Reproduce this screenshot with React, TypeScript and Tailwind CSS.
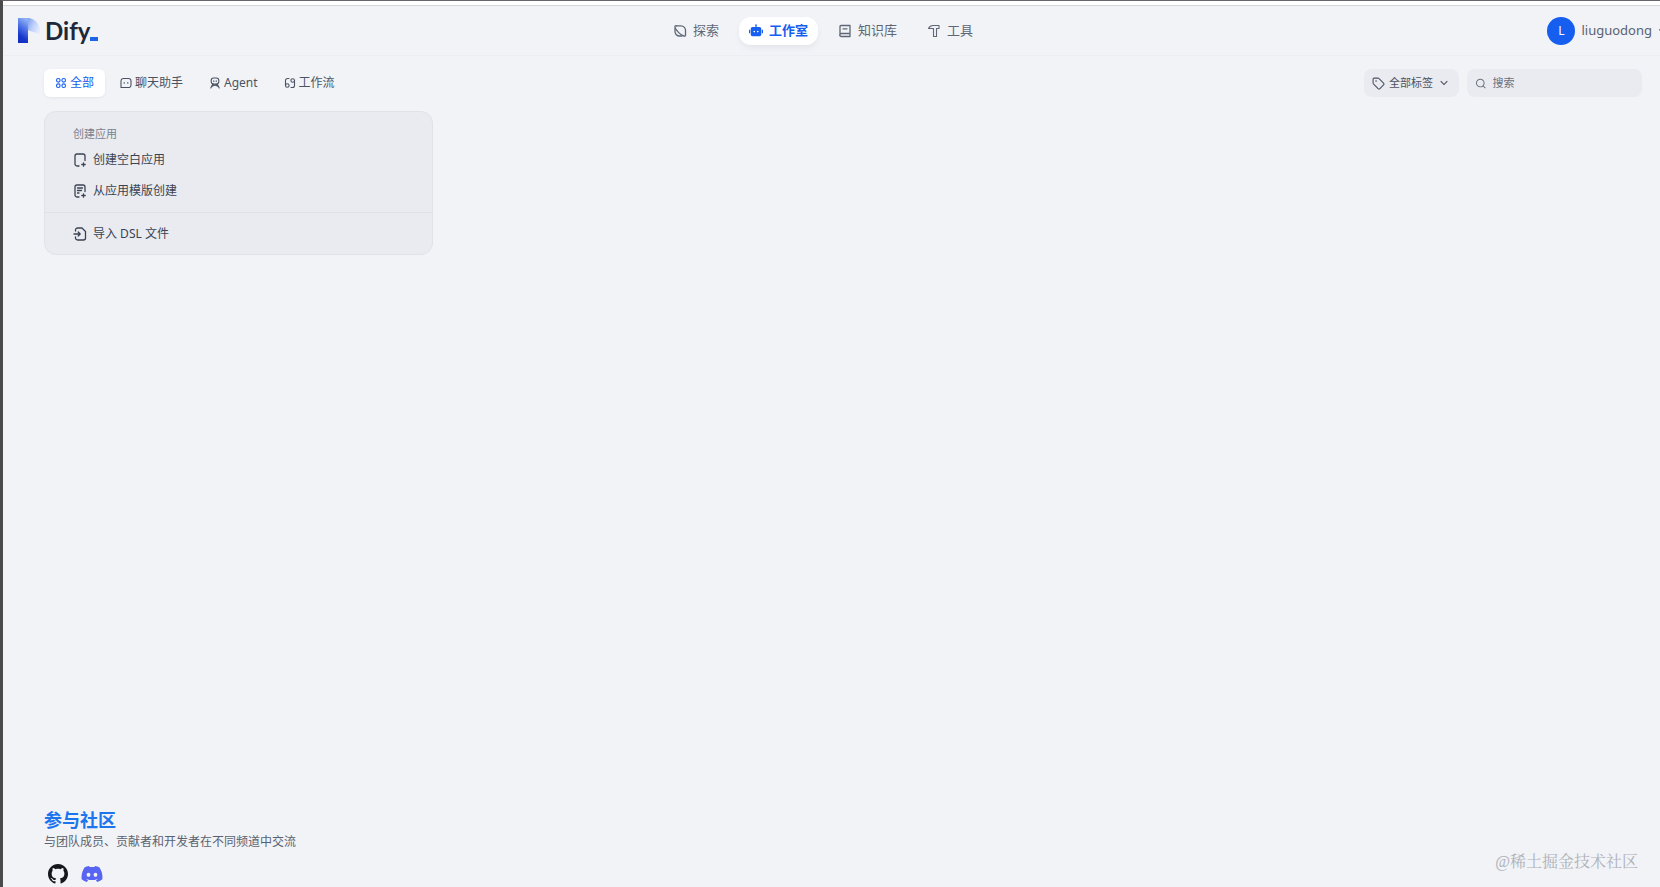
import type { ReactNode } from 'react';
import { Tag } from 'lucide-react';
import {
  RiArrowDownSLine,
  RiDiscordFill,
  RiGithubFill,
  RiRobot2Fill,
  RiSearchLine,
} from 'react-icons/ri';

type NavItem = { id: string; label: string; icon: ReactNode; active?: boolean };

const stroke = {
  fill: 'none',
  stroke: 'currentColor',
  strokeWidth: 1.3,
  strokeLinecap: 'round' as const,
  strokeLinejoin: 'round' as const,
  'aria-hidden': true,
};

function LogoMark() {
  return (
    <svg width="23" height="25" viewBox="0 0 23 25" aria-hidden="true">
      <defs>
        <linearGradient id="stem" x1="0.6" y1="0" x2="0.3" y2="1">
          <stop offset="0" stopColor="#8fb0f4" />
          <stop offset="0.4" stopColor="#4a6fe4" />
          <stop offset="0.75" stopColor="#1637cc" />
          <stop offset="1" stopColor="#1230c0" />
        </linearGradient>
        <linearGradient id="bowl" x1="0" y1="0.1" x2="1" y2="0.6">
          <stop offset="0" stopColor="#7d9ff0" />
          <stop offset="0.5" stopColor="#bccffa" />
          <stop offset="1" stopColor="#e3ebfd" />
        </linearGradient>
      </defs>
      <path d="M9.500 0a12.500 12.500 0 0 1 12.500 12.500c0 1.500-.2 2.500-.6 3.500L9.500 12z" fill="url(#bowl)" />
      <path d="M0 0h10v25H0z" fill="url(#stem)" />
    </svg>
  );
}

function ExploreIcon() {
  return (
    <svg width="14" height="14" viewBox="0 0 14 14" {...stroke}>
      <path d="M3.500 1.800H8A4.500 4.500 0 0 1 12.500 6.300V11" />
      <path d="M2 4.500V7.500A4.500 4.500 0 0 0 6.500 12H9" />
      <path d="M3.500 1.800C2.300 1.500 1.700 2 2 3.300c.4 1.700 2 3.600 3.700 5.300s3.500 3 5.100 3.400c1.300.3 1.900-.1 1.700-1.200" />
    </svg>
  );
}

function BookIcon() {
  return (
    <svg width="14" height="14" viewBox="0 0 14 14" {...stroke}>
      <path d="M2 11.200V2.500a1 1 0 0 1 1-1h9v11H3.200a1.200 1.200 0 0 1 0-3H12M5 4.800h4" />
    </svg>
  );
}

function HammerIcon() {
  return (
    <svg width="14" height="14" viewBox="0 0 14 14" {...stroke} strokeWidth={1.1}>
      <path d="M1.500 4.500C2.500 2.500 4 1.500 6 1.500h6v3H9.500v8h-3v-8z" />
    </svg>
  );
}

function AllIcon() {
  return (
    <svg width="12" height="12" viewBox="0 0 12 12" {...stroke} strokeWidth={1.1}>
      <circle cx="3.300" cy="3.300" r="1.800" />
      <circle cx="8.700" cy="3.300" r="1.800" />
      <circle cx="3.300" cy="8.700" r="1.800" />
      <circle cx="8.700" cy="8.700" r="1.800" />
    </svg>
  );
}

function ChatIcon() {
  return (
    <svg width="12" height="12" viewBox="0 0 12 12" {...stroke} strokeWidth={1.1}>
      <path d="M1 10.500V4a2.500 2.500 0 0 1 2.500-2.500h5A2.500 2.500 0 0 1 11 4v4a2.500 2.500 0 0 1-2.500 2.500z" />
      <path d="M4.200 5.500v.8M7.800 5.500v.8" />
    </svg>
  );
}

function AgentIcon() {
  return (
    <svg width="12" height="12" viewBox="0 0 12 12" {...stroke} strokeWidth={1.1}>
      <rect x="2.200" y="1" width="7.600" height="6" rx="2.500" />
      <path d="M4.800 3.800v.6M7.200 3.800v.6M3.800 7l-2 4M8.200 7l2 4M3.200 9.200 8.200 7M8.800 9.200 3.800 7" />
    </svg>
  );
}

function FlowIcon() {
  return (
    <svg width="12" height="12" viewBox="0 0 12 12" {...stroke} strokeWidth={1.1}>
      <path d="M5 1.500H3.500A2 2 0 0 0 1.500 3.500v5M7 10.500h1.500a2 2 0 0 0 2-2v-5" />
      <circle cx="3.300" cy="8.500" r="1.800" />
      <circle cx="8.700" cy="3.500" r="1.800" />
    </svg>
  );
}

function BlankAppIcon() {
  return (
    <svg width="14" height="14" viewBox="0 0 14 14" {...stroke}>
      <path d="M6 13H4a2 2 0 0 1-2-2V3a2 2 0 0 1 2-2h6a2 2 0 0 1 2 2v4.500M10.500 9.800v3.400M8.800 11.500h3.400" />
    </svg>
  );
}

function TemplateIcon() {
  return (
    <svg width="14" height="14" viewBox="0 0 14 14" {...stroke}>
      <path d="M6 13H4a2 2 0 0 1-2-2V3a2 2 0 0 1 2-2h6a2 2 0 0 1 2 2v4.500M10.500 9.800v3.400M8.800 11.500h3.400M4.500 4h5M4.500 6.500h4M4.500 9h1.500" />
    </svg>
  );
}

function ImportIcon() {
  return (
    <svg width="14" height="14" viewBox="0 0 14 14" {...stroke}>
      <path d="M2.500 4V3a2 2 0 0 1 2-2H9l3.500 3.500V11a2 2 0 0 1-2 2h-6a2 2 0 0 1-2-2v-1M1 7h6M5.200 5 7.200 7l-2 2" />
    </svg>
  );
}

const navItems: NavItem[] = [
  { id: 'explore', label: '探索', icon: <ExploreIcon /> },
  { id: 'studio', label: '工作室', icon: <RiRobot2Fill size={14} />, active: true },
  { id: 'knowledge', label: '知识库', icon: <BookIcon /> },
  { id: 'tools', label: '工具', icon: <HammerIcon /> },
];

const tabs: NavItem[] = [
  { id: 'all', label: '全部', icon: <AllIcon />, active: true },
  { id: 'chat', label: '聊天助手', icon: <ChatIcon /> },
  { id: 'agent', label: 'Agent', icon: <AgentIcon /> },
  { id: 'workflow', label: '工作流', icon: <FlowIcon /> },
];

function Header() {
  return (
    <header className="flex h-[50px] shrink-0 items-center justify-between border-b border-[#eceef3] pl-[15px]">
      <a href="#" className="flex items-center gap-1" aria-label="Dify">
        <LogoMark />
        <span className="flex items-end">
          <span className="font-[Lato] text-2xl leading-7 font-bold text-[#1f2838]">Dify</span>
          <span className="mb-1 h-1 w-2 bg-[#1c64e8]" />
        </span>
      </a>
      <nav className="flex items-center gap-2.5">
        {navItems.map((item) => (
          <a
            key={item.id}
            href="#"
            className={
              item.active
                ? 'flex h-7 items-center gap-1.5 rounded-xl bg-white px-2.5 text-[13px] font-bold text-[#155eef] shadow-md shadow-gray-200'
                : 'flex h-7 items-center gap-1.5 rounded-xl px-2.5 text-[13px] text-[#5f6776]'
            }
          >
            {item.icon}
            {item.label}
          </a>
        ))}
      </nav>
      <button type="button" className="flex items-center text-[13px] text-[#5a6270]">
        <span className="mr-1.5 flex size-7 items-center justify-center rounded-full bg-[#155eef] text-xs text-white">L</span>
        liuguodong
        <RiArrowDownSLine size={12} className="-mr-2 ml-1" />
      </button>
    </header>
  );
}

function Toolbar() {
  return (
    <div className="flex items-center justify-between">
      <div className="flex gap-1">
        {tabs.map((tab) => (
          <button
            key={tab.id}
            type="button"
            className={
              tab.active
                ? 'flex h-7 items-center gap-[3px] rounded-md bg-white px-[11px] text-xs text-[#155eef] shadow-sm shadow-gray-200'
                : 'flex h-7 items-center gap-[3px] rounded-md px-[11px] text-xs text-[#4b5362]'
            }
          >
            {tab.icon}
            {tab.label}
          </button>
        ))}
      </div>
      <div className="flex gap-2">
        <button type="button" className="flex h-7 items-center gap-1 rounded-lg bg-[#e9ebf0] px-2 text-[11px] text-[#4b5362]">
          <Tag size={13} />
          全部标签
          <RiArrowDownSLine size={14} />
        </button>
        <label className="flex h-7 w-[175px] items-center gap-1.5 rounded-lg bg-[#e9ebf0] px-2 text-[#6b7280]">
          <RiSearchLine size={13} />
          <input
            type="text"
            aria-label="搜索"
            placeholder="搜索"
            className="w-full bg-transparent text-[11px] outline-none placeholder:text-[#6b7280]"
          />
        </label>
      </div>
    </div>
  );
}

function CreateCard() {
  const row = 'flex h-[31px] w-full items-center gap-1.5 px-7 text-xs text-[#3b4352]';
  return (
    <section className="rounded-xl border border-[#e0e2e8] bg-[#e9ebf0]">
      <div className="pt-3 pb-1.5">
        <h2 className="px-7 text-[11px] leading-5 text-[#7a8290]">创建应用</h2>
        <button type="button" className={row}><BlankAppIcon />创建空白应用</button>
        <button type="button" className={row}><TemplateIcon />从应用模版创建</button>
      </div>
      <div className="border-t border-[#dfe1e7] py-[5px]">
        <button type="button" className={row}><ImportIcon />导入 DSL 文件</button>
      </div>
    </section>
  );
}

export default function App() {
  return (
    <div className="flex h-screen flex-col overflow-hidden border-t border-l-3 border-t-[#66666a] border-l-[#4a4a4d] bg-[#f1f3f7] font-['Noto_Sans','Noto_Sans_CJK_SC',sans-serif]">
      <div className="h-[5px] shrink-0 border-b border-[#d5d6da] bg-white" />
      <Header />
      <main className="flex flex-1 flex-col gap-3.5 pt-[13px] pr-[18px] pl-[41px]">
        <Toolbar />
        <div className="grid grid-cols-4 gap-3.5">
          <CreateCard />
        </div>
      </main>
      <footer className="flex items-end justify-between pr-[22px] pb-px pl-[41px]">
        <div>
          <h3 className="text-lg leading-6 font-bold text-[#1d75ee]">参与社区</h3>
          <p className="text-xs leading-5 text-[#5a6270]">与团队成员、贡献者和开发者在不同频道中交流</p>
          <div className="mt-2.5 flex gap-2.5 pl-0.5">
            <a href="#" aria-label="GitHub"><RiGithubFill size={24} className="text-[#15171c]" /></a>
            <a href="#" aria-label="Discord"><RiDiscordFill size={24} className="text-[#5865f2]" /></a>
          </div>
        </div>
        <p className="pb-2.5 font-['Liberation_Serif','Noto_Serif_CJK_SC','Noto_Sans_CJK_SC',serif] text-base leading-7 text-[#b0b2b7]">@稀土掘金技术社区</p>
      </footer>
    </div>
  );
}
